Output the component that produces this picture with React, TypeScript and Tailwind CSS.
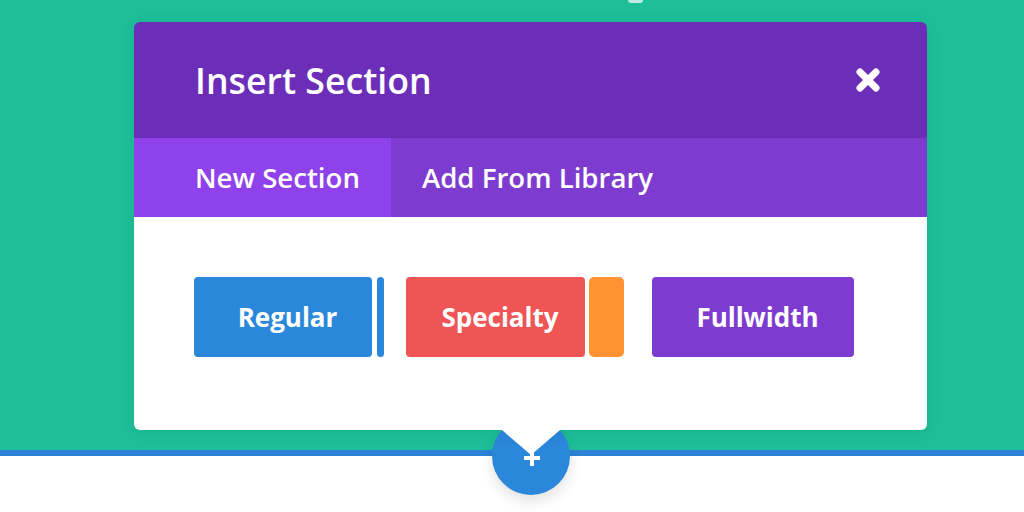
const CloseIcon = () => (
  <svg width="26" height="26" viewBox="0 0 26 26">
    <path
      d="M5 5 L21 21 M21 5 L5 21"
      stroke="white"
      strokeWidth="7"
      strokeLinecap="round"
      fill="none"
    />
  </svg>
);

const PlusIcon = () => (
  <svg width="20" height="20" viewBox="0 0 20 20">
    <path d="M10 2 V18 M2 10 H18" stroke="white" strokeWidth="4" fill="none" />
  </svg>
);

const SectionButton = ({
  label,
  className,
}: {
  label: string;
  className: string;
}) => (
  <div
    className={`h-[80px] rounded-[4px] flex justify-center items-center pl-[9px] text-white font-bold text-[26px] ${className}`}
  >
    {label}
  </div>
);

export default function App() {
  return (
    <div
      className="relative w-[1024px] h-[512px] overflow-hidden bg-white"
      style={{ fontFamily: '"Open Sans", "Liberation Sans", sans-serif' }}
    >
      <div className="relative h-[456px] bg-[#1ebe99] border-b-[6px] border-[#2b84d8] pt-[22px] pl-[134px]">
        {/* cut-off heading behind the popup */}
        <div className="absolute left-[628px] top-[-3px] w-[15px] h-[6px] rounded-full bg-white/70" />

        {/* add-section button */}
        <div className="absolute left-[492px] top-[417px] w-[78px] h-[78px] rounded-full bg-[#2b87da] shadow-[0_6px_14px_rgba(0,0,0,0.12)] flex justify-center items-center pt-[4px] pl-[2px] z-10">
          <PlusIcon />
        </div>

        {/* popup */}
        <div className="relative z-20 w-[793px] rounded-[6px] shadow-[0_2px_16px_rgba(0,0,0,0.08)]">
          <div className="h-[116px] bg-[#6c2eb9] rounded-t-[6px] flex items-center justify-between pl-[61px] pr-[46px]">
            <div className="text-white font-semibold text-[35.7px] leading-none pt-[2px]">
              Insert Section
            </div>
            <CloseIcon />
          </div>
          <div className="h-[79px] bg-[#7e3bd0] flex text-white font-semibold text-[27.6px] leading-none">
            <div className="bg-[#8f42ec] flex items-center pl-[61px] pr-[31px]">
              New Section
            </div>
            <div className="flex items-center px-[31px]">Add From Library</div>
          </div>
          <div className="h-[213px] bg-white rounded-b-[6px] pt-[60px] pl-[60px] flex items-start">
            <div className="flex gap-[5px]">
              <SectionButton label="Regular" className="w-[178px] bg-[#2b87da]" />
              <div className="w-[7px] h-[80px] rounded-[4px] bg-[#2b87da]" />
            </div>
            <div className="flex gap-[4px] ml-[22px]">
              <SectionButton label="Specialty" className="w-[179px] bg-[#ef5555]" />
              <div className="w-[35px] h-[80px] rounded-[5px] bg-[#ff9232]" />
            </div>
            <SectionButton label="Fullwidth" className="ml-[28px] w-[202px] bg-[#7e3bd0]" />
          </div>
          <div className="absolute top-full left-[368px] w-0 h-0 border-l-[29px] border-r-[29px] border-t-[25px] border-l-transparent border-r-transparent border-t-white" />
        </div>
      </div>
    </div>
  );
}
